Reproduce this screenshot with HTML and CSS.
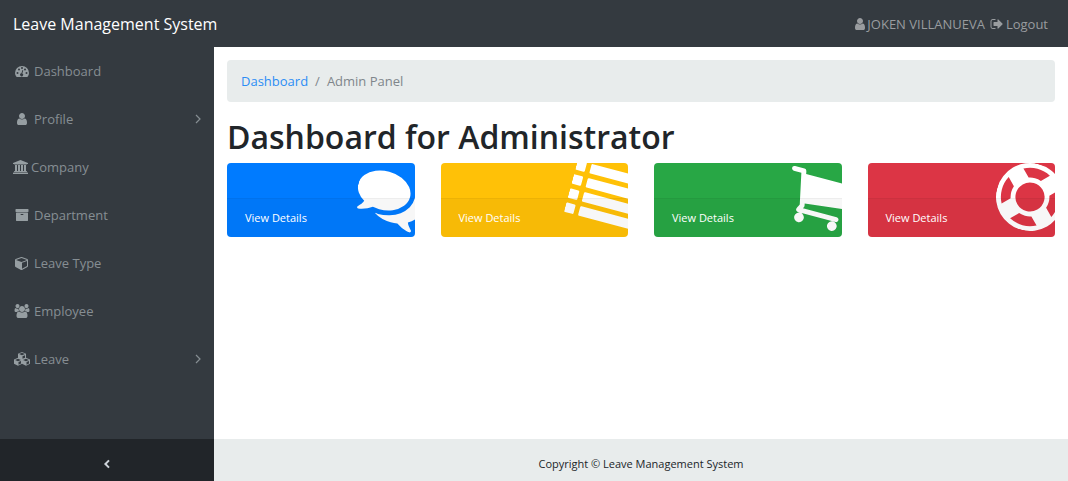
FILE: index.html
```
<!DOCTYPE html>
<html lang="en">
<head>
    <meta charset="UTF-8">
    <meta name="viewport" content="width=device-width, initial-scale=1.0">
    <title>Leave Management System</title>
    <link rel="stylesheet" href="styles.css">
</head>
<body>
    <!-- Icon shapes -->
    <svg class="sprite" aria-hidden="true">
        <symbol id="i-user" viewBox="0 0 1792 1792"><path d="M1536 1399q0 109-62.500 187t-150.500 78h-854q-88 0-150.500-78t-62.500-187q0-85 8.500-160.500t31.500-152 58.500-131 94-89 134.500-34.500q131 128 313 128t313-128q76 0 134.500 34.500t94 89 58.500 131 31.500 152 8.500 160.500zm-256-887q0 159-112.500 271.500t-271.500 112.500-271.500-112.500-112.500-271.500 112.500-271.500 271.500-112.500 271.500 112.500 112.500 271.500z"/></symbol>
        <symbol id="i-signout" viewBox="0 0 1792 1792"><path d="M704 1440q0 4 1 20t.5 26.500-3 23.500-10 19.500-20.500 6.500h-320q-119 0-203.500-84.500t-84.500-203.500v-704q0-119 84.500-203.500t203.500-84.500h320q13 0 22.500 9.500t9.500 22.500q0 4 1 20t.5 26.500-3 23.500-10 19.500-20.500 6.500h-320q-66 0-113 47t-47 113v704q0 66 47 113t113 47h312l11.500 1 11.500 3 8 5.500 7 9 2 13.500zm928-544q0 26-19 45l-544 544q-19 19-45 19t-45-19-19-45v-288h-448q-26 0-45-19t-19-45v-384q0-26 19-45t45-19h448v-288q0-26 19-45t45-19 45 19l544 544q19 19 19 45z"/></symbol>
        <symbol id="i-dashboard" viewBox="0 0 1792 1792"><path fill-rule="evenodd" d="M232 1664q-28 0-48-24Q0 1418 0 1152a896 896 0 0 1 1792 0q0 266-184 488-20 24-48 24zM320 1024a128 128 0 1 0 0 256 128 128 0 1 0 0-256zM512 576a128 128 0 1 0 0 256 128 128 0 1 0 0-256zM896 384a128 128 0 1 0 0 256 128 128 0 1 0 0-256zM1280 576a128 128 0 1 0 0 256 128 128 0 1 0 0-256zM1472 1024a128 128 0 1 0 0 256 128 128 0 1 0 0-256zM940 1218l112-386q-6-54-60-60-54 0-66 44l-101 382a192 192 0 1 0 115 20z"/></symbol>
        <symbol id="i-bank" viewBox="0 0 1920 1792"><path d="M960 0l960 384v128h-128q0 26-20.500 45t-48.500 19h-1526q-28 0-48.500-19t-20.500-45h-128v-128zm-704 640h256v768h128v-768h256v768h128v-768h256v768h128v-768h256v768h59q28 0 48.500 19t20.500 45v64h-1664v-64q0-26 20.500-45t48.500-19h59v-768zm1595 960q28 0 48.500 19t20.500 45v128h-1920v-128q0-26 20.500-45t48.500-19h1782z"/></symbol>
        <symbol id="i-archive" viewBox="0 0 1792 1792"><path d="M1088 832q0-26-19-45t-45-19h-256q-26 0-45 19t-19 45 19 45 45 19h256q26 0 45-19t19-45zm576-192v960q0 26-19 45t-45 19h-1408q-26 0-45-19t-19-45v-960q0-26 19-45t45-19h1408q26 0 45 19t19 45zm64-448v256q0 26-19 45t-45 19h-1536q-26 0-45-19t-19-45v-256q0-26 19-45t45-19h1536q26 0 45 19t19 45z"/></symbol>
        <symbol id="i-cube" viewBox="0 0 1792 1792"><path d="M896 1629l640-349v-636l-640 233v752zm-64-865l698-254-698-254-698 254zm832-252v768q0 35-18 65t-49 47l-704 384q-28 16-61 16t-61-16l-704-384q-31-17-49-47t-18-65v-768q0-40 23-73t61-47l704-256q22-8 44-8t44 8l704 256q38 14 61 47t23 73z"/></symbol>
        <symbol id="i-users" viewBox="0 0 1920 1792"><path d="M593 896q-162 5-265 128h-134q-82 0-138-40.500t-56-118.500q0-353 124-353 6 0 43.500 21t97.500 42.500 119 21.500q67 0 133-23-5 37-5 66 0 139 81 256zm1071 637q0 120-73 189.500t-194 69.500h-874q-121 0-194-69.500t-73-189.500q0-53 3.500-103.500t14-109 26.500-108.500 43-97.500 62-81 85.500-53.500 111.500-20q10 0 43 21.500t73 48 107 48 135 21.500 135-21.500 107-48 73-48 43-21.500q61 0 111.500 20t85.500 53.500 62 81 43 97.500 26.500 108.500 14 109 3.500 103.500zm-1024-1277q0 106-75 181t-181 75-181-75-75-181 75-181 181-75 181 75 75 181zm704 384q0 159-112.500 271.500t-271.500 112.500-271.500-112.500-112.500-271.500 112.500-271.500 271.500-112.500 271.500 112.500 112.500 271.500zm576 225q0 78-56 118.500t-138 40.500h-134q-103-123-265-128 81-117 81-256 0-29-5-66 66 23 133 23 59 0 119-21.500t97.500-42.500 43.500-21q124 0 124 353zm-128-609q0 106-75 181t-181 75-181-75-75-181 75-181 181-75 181 75 75 181z"/></symbol>
        <symbol id="i-cubes" viewBox="0 0 2304 1792"><path fill-rule="evenodd" d="M1152 0l512 220v520l512 220v540l-512 256-512-256-512 256-512-256V960l512-220V220zM1152 110L780 270l372 160 372-160zM1216 545v330l320-137V408zM640 850L268 1010l372 160 372-160zM704 1285v360l320-160v-337zM1664 850l-372 160 372 160 372-160zM1728 1285v360l320-160v-337z"/></symbol>
        <symbol id="i-right" viewBox="0 0 10 16"><path d="M2.500 3l5 5-5 5" fill="none" stroke="currentColor" stroke-width="1.500"/></symbol>
        <symbol id="i-left" viewBox="0 0 10 16"><path d="M7.500 3.500L3 8l4.500 4.500" fill="none" stroke="currentColor" stroke-width="2.500"/></symbol>
        <symbol id="i-comments" viewBox="0 0 1792 1792"><path d="M1408 768q0 139-94 257t-256.500 186.500-353.500 68.500q-86 0-176-16-124 88-278 128-36 9-86 16h-3q-11 0-20.500-8t-11.500-21q-1-3-1-6.500t.5-6.500 2-6l2.500-5 3.500-5.500 4-5 4.500-5 4-4.500q5-6 23-25t26-29.500 22.500-29 25-38.500 20.500-44q-124-72-195-177t-71-224q0-139 94-257t256.500-186.500 353.500-68.500 353.500 68.500 256.500 186.500 94 257zm384 256q0 120-71 224.500t-195 176.500q10 24 20.500 44t25 38.500 22.500 29 26 29.500 23 25q1 1 4 4.500t4.500 5 4 5 3.500 5.500l2.500 5 2 6 .5 6.500-1 6.500q-3 14-13 22t-22 7q-50-7-86-16-154-40-278-128-90 16-176 16-271 0-472-132 58 4 88 4 161 0 309-45t264-129q125-92 192-212t67-254q0-77-23-152 129 71 204 178t75 230z"/></symbol>
        <symbol id="i-list" viewBox="0 0 1792 1792"><g><rect y="128" width="256" height="256" rx="32"/><rect x="384" y="128" width="1408" height="256" rx="32"/><rect y="512" width="256" height="256" rx="32"/><rect x="384" y="512" width="1408" height="256" rx="32"/><rect y="896" width="256" height="256" rx="32"/><rect x="384" y="896" width="1408" height="256" rx="32"/><rect y="1280" width="256" height="256" rx="32"/><rect x="384" y="1280" width="1408" height="256" rx="32"/></g></symbol>
        <symbol id="i-cart" viewBox="0 0 1792 1792"><path d="M704 1536q0 52-38 90t-90 38-90-38-38-90 38-90 90-38 90 38 38 90zm896 0q0 52-38 90t-90 38-90-38-38-90 38-90 90-38 90 38 38 90zm128-1088v512q0 24-16.500 42.500t-40.500 21.500l-1044 122q13 60 13 70 0 16-24 64h920q26 0 45 19t19 45-19 45-45 19h-1024q-26 0-45-19t-19-45q0-11 8-31.500t16-36 21.500-40 15.500-29.500l-177-823h-204q-26 0-45-19t-19-45 19-45 45-19h256q16 0 28.500 6.500t19.500 15.500 13 24.500 8 26 5.500 29.500 4.500 26h1201q26 0 45 19t19 45z"/></symbol>
        <symbol id="i-ring" viewBox="0 0 1792 1792"><path d="M896 0q182 0 348 71t286 191 191 286 71 348-71 348-191 286-286 191-348 71-348-71-286-191-191-286-71-348 71-348 191-286 286-191 348-71zm0 128q-190 0-361 90l194 194q82-28 167-28t167 28l194-194q-171-90-361-90zm-678 1129l194-194q-28-82-28-167t28-167l-194-194q-90 171-90 361t90 361zm678 407q190 0 361-90l-194-194q-82 28-167 28t-167-28l-194 194q171 90 361 90zm0-384q159 0 271.500-112.500t112.500-271.500-112.500-271.500-271.500-112.500-271.500 112.500-112.500 271.500 112.500 271.500 271.500 112.500zm484-217l194 194q90-171 90-361t-90-361l-194 194q28 82 28 167t-28 167z"/></symbol>
    </svg>

    <!-- Top navigation -->
    <header class="navbar">
        <a href="#" class="navbar-brand">Leave Management System</a>
        <nav class="navbar-user">
            <a href="#" class="user-link"><svg class="icon"><use href="#i-user"/></svg>JOKEN VILLANUEVA</a>
            <a href="#" class="logout-link"><svg class="icon"><use href="#i-signout"/></svg>Logout</a>
        </nav>
    </header>

    <div class="wrapper">
        <!-- Sidebar -->
        <nav class="sidebar">
            <ul class="menu">
                <li><a href="#"><svg class="icon"><use href="#i-dashboard"/></svg>Dashboard</a></li>
                <li><a href="#"><svg class="icon"><use href="#i-user"/></svg>Profile<svg class="arrow"><use href="#i-right"/></svg></a></li>
                <li><a href="#"><svg class="icon icon-narrow"><use href="#i-bank"/></svg>Company</a></li>
                <li><a href="#"><svg class="icon"><use href="#i-archive"/></svg>Department</a></li>
                <li><a href="#"><svg class="icon"><use href="#i-cube"/></svg>Leave Type</a></li>
                <li><a href="#"><svg class="icon"><use href="#i-users"/></svg>Employee</a></li>
                <li><a href="#"><svg class="icon"><use href="#i-cubes"/></svg>Leave<svg class="arrow"><use href="#i-right"/></svg></a></li>
            </ul>
            <button type="button" class="toggler" aria-label="Toggle sidebar"><svg class="arrow"><use href="#i-left"/></svg></button>
        </nav>

        <div class="page">
            <main class="content">
                <ol class="breadcrumb">
                    <li><a href="#">Dashboard</a></li>
                    <li>Admin Panel</li>
                </ol>
                <h1>Dashboard for Administrator</h1>
                <div class="cards">
                    <div class="card card-primary">
                        <svg class="card-icon"><use href="#i-comments"/></svg>
                        <a href="#" class="card-footer">View Details</a>
                    </div>
                    <div class="card card-warning">
                        <svg class="card-icon"><use href="#i-list"/></svg>
                        <a href="#" class="card-footer">View Details</a>
                    </div>
                    <div class="card card-success">
                        <svg class="card-icon"><use href="#i-cart"/></svg>
                        <a href="#" class="card-footer">View Details</a>
                    </div>
                    <div class="card card-danger">
                        <svg class="card-icon"><use href="#i-ring"/></svg>
                        <a href="#" class="card-footer">View Details</a>
                    </div>
                </div>
            </main>
            <footer class="footer">Copyright © Leave Management System</footer>
        </div>
    </div>
</body>
</html>
```
FILE: styles.css
```
* {
    box-sizing: border-box;
    margin: 0;
    padding: 0;
}

body {
    font-family: "Segoe UI", "Open Sans", "Noto Sans", sans-serif;
    font-size: 13px;
    line-height: 20px;
    color: #212529;
    background: #fff;
    display: flex;
    flex-direction: column;
    min-height: 100vh;
}

a {
    color: #2b8cf5;
    text-decoration: none;
}

ul, ol {
    list-style: none;
}

.sprite {
    position: absolute;
    width: 0;
    height: 0;
}

.icon {
    width: 14px;
    height: 14px;
    fill: currentColor;
    flex: none;
}

/* Top bar */
.navbar {
    display: flex;
    align-items: center;
    justify-content: space-between;
    height: 47px;
    padding: 0 20px 0 13px;
    background: #343a40;
}

.navbar-brand {
    color: #fff;
    font-size: 16px;
}

.navbar-user {
    display: flex;
    gap: 5px;
}

.navbar-user a {
    display: flex;
    align-items: center;
    color: #999c9f;
}

.logout-link {
    gap: 2px;
}

.wrapper {
    flex: 1;
    display: flex;
}

/* Sidebar */
.sidebar {
    display: flex;
    flex-direction: column;
    justify-content: space-between;
    flex: none;
    width: 214px;
    background: #343a40;
}

.menu a {
    display: flex;
    align-items: center;
    gap: 3px;
    height: 48px;
    padding: 0 12px 0 13px;
    color: #868e93;
}

.menu .icon {
    width: 18px;
    fill: #969ea2;
}

.menu .icon-narrow {
    width: 15px;
}

.arrow {
    width: 8px;
    height: 14px;
}

.menu .arrow {
    margin-left: auto;
}

.toggler {
    display: flex;
    justify-content: center;
    height: 42px;
    padding-top: 18px;
    border: none;
    background: #212529;
    color: #ced4da;
    cursor: pointer;
}

/* Content */
.page {
    flex: 1;
    display: flex;
    flex-direction: column;
}

.content {
    flex: 1;
    padding: 13px;
}

.breadcrumb {
    display: flex;
    padding: 11px 14px;
    margin-bottom: 14px;
    border-radius: 4px;
    background: #e8ecec;
    color: #7f868b;
}

.breadcrumb li + li::before {
    content: "/";
    padding: 0 7px;
}

h1 {
    margin-bottom: 6px;
    font-size: 32px;
    font-weight: 600;
    line-height: 41px;
}

.cards {
    display: grid;
    grid-template-columns: repeat(4, 1fr);
    gap: 26px;
}

.card {
    position: relative;
    overflow: hidden;
    padding-top: 35px;
    border-radius: 4px;
    color: #fff;
}

.card-primary { background: #007bff; }
.card-warning { background: #ffc107; }
.card-success { background: #28a745; }
.card-danger { background: #dc3545; }

.card-icon {
    position: absolute;
    top: 0;
    right: -9px;
    width: 68px;
    height: 68px;
    fill: #fff;
    transform: rotate(15deg);
}

.card-footer {
    position: relative;
    display: block;
    padding: 9px 18px;
    border-top: 1px solid rgba(0, 0, 0, 0.04);
    background: rgba(0, 0, 0, 0.03);
    color: #fff;
    font-size: 11px;
}

.footer {
    padding: 15px 0 7px;
    background: #e8ecec;
    font-size: 11px;
    text-align: center;
}
```
